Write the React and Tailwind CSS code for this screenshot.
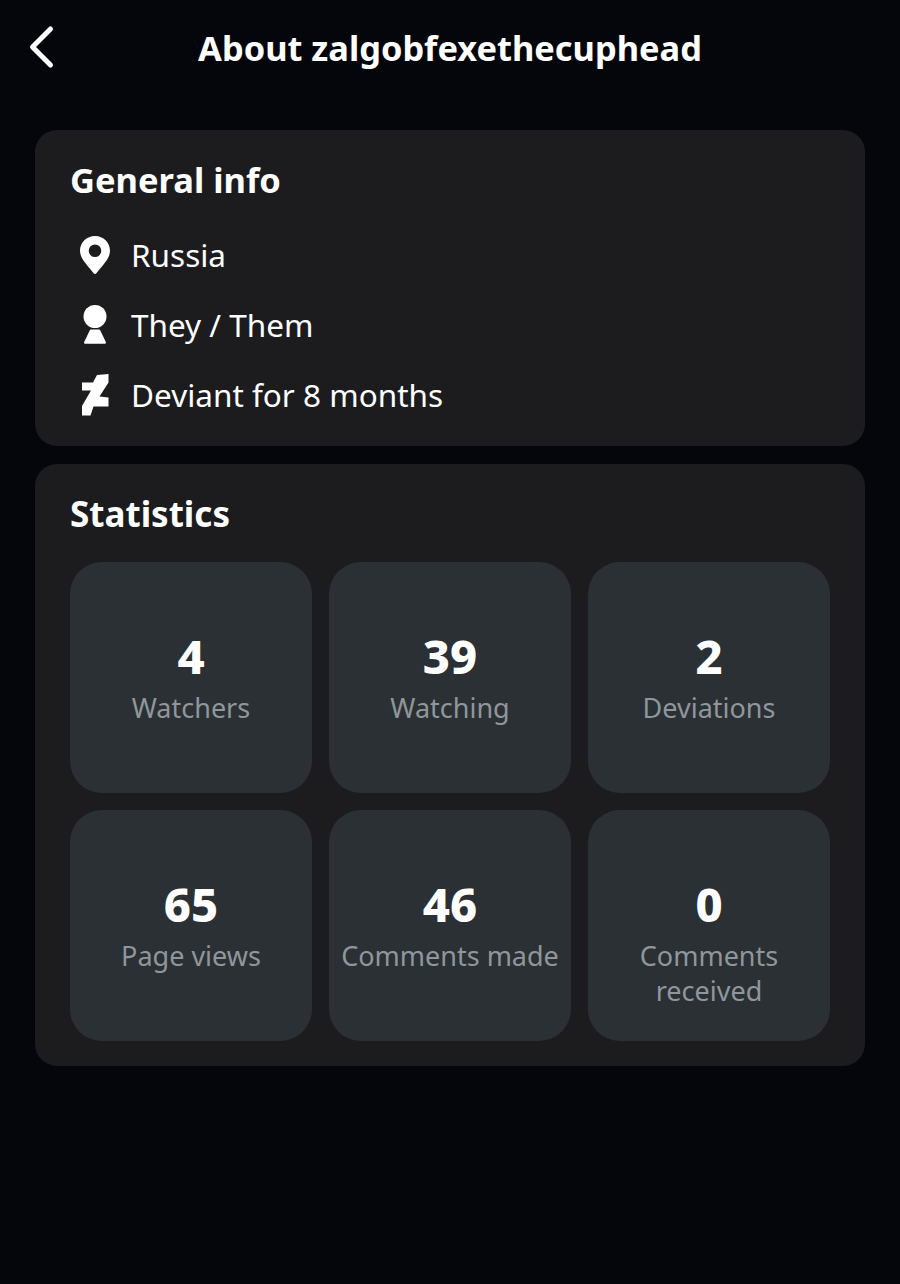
const stats = [
  { value: '4', label: 'Watchers' },
  { value: '39', label: 'Watching' },
  { value: '2', label: 'Deviations' },
  { value: '65', label: 'Page views' },
  { value: '46', label: 'Comments made' },
  { value: '0', label: 'Comments received' },
];

function PinIcon() {
  return (
    <svg width="32" height="40" viewBox="0 0 32 40" className="block">
      <path
        fill="#fff"
        fillRule="evenodd"
        d="M16 1C7.600 1 1 7.600 1 15.600c0 4 1.500 7.200 3.800 10.400 2.600 3.600 6 7.400 9.800 12.300.7.900 2.100.900 2.800 0 3.800-4.900 7.200-8.700 9.800-12.300C29.500 22.800 31 19.600 31 15.600 31 7.600 24.400 1 16 1zm0 8.500a6.300 6.300 0 1 1 0 12.600 6.300 6.300 0 0 1 0-12.600z"
      />
    </svg>
  );
}

function PersonIcon() {
  return (
    <svg width="24" height="40" viewBox="0 0 24 40" className="block">
      <circle cx="12" cy="11.500" r="11.500" fill="#fff" />
      <path fill="#fff" d="M8 24.500h8c.6 0 1 .3 1.200.8L22.800 37c.4 1-.2 1.800-1.200 1.800H2.400c-1 0-1.600-.8-1.200-1.800L6.800 25.300c.2-.5.600-.8 1.200-.8z" />
    </svg>
  );
}

function DaIcon() {
  return (
    <svg width="27" height="42" viewBox="0 0 27 42" className="block">
      <path fill="#fff" d="M15 1 26.500 0v8.500l-9 14 9 1v9h-15l-3 9H0V32l9-15.500H0v-8h11z" />
    </svg>
  );
}

function InfoRow({ icon, text }) {
  return (
    <div className="flex h-[70px] items-center">
      <div className="flex w-[50px] shrink-0 justify-center">{icon}</div>
      <span className="ml-[11px] text-[31.500px] leading-none text-white">{text}</span>
    </div>
  );
}

function App() {
  return (
    <div className="h-[1284px] overflow-hidden bg-[#05060b] font-['Noto_Sans',sans-serif]">
      <header className="relative flex h-[98px] items-center justify-center">
        <svg width="30" height="46" viewBox="0 0 30 46" className="absolute left-[26px] top-[24px]">
          <path d="M24.500 5 6.500 23 24.500 41" fill="none" stroke="#fff" strokeWidth="5" strokeLinecap="round" strokeLinejoin="round" />
        </svg>
        <h1 className="-mt-[2px] text-[34.400px] font-bold leading-none text-white">About zalgobfexethecuphead</h1>
      </header>

      <div className="mt-8 flex flex-col gap-[18px] px-[35px]">
        <section className="h-[316px] rounded-[22px] bg-[#1c1c1e] px-[35px] pt-[31px]">
          <h2 className="text-[34.500px] font-bold leading-[38px] text-white">General info</h2>
          <div className="mt-[21px]">
            <InfoRow icon={<PinIcon />} text="Russia" />
            <InfoRow icon={<PersonIcon />} text="They / Them" />
            <InfoRow icon={<DaIcon />} text="Deviant for 8 months" />
          </div>
        </section>

        <section className="h-[602px] rounded-[22px] bg-[#1c1c1e] px-[35px] pt-[31px]">
          <h2 className="text-[35px] font-bold leading-[38px] text-white">Statistics</h2>
          <div className="mt-[29px] grid grid-cols-3 gap-[17px]">
            {stats.map((s) => (
              <div key={s.label} className="flex h-[231px] flex-col items-center rounded-[32px] bg-[#2b3034] px-2 pt-[68px]">
                <p className="text-[47px] font-extrabold leading-[52px] text-white">{s.value}</p>
                <p className="mt-[8px] text-center text-[27px] leading-[35px] text-[#8f969c]">{s.label}</p>
              </div>
            ))}
          </div>
        </section>
      </div>
    </div>
  );
}

export default App;
